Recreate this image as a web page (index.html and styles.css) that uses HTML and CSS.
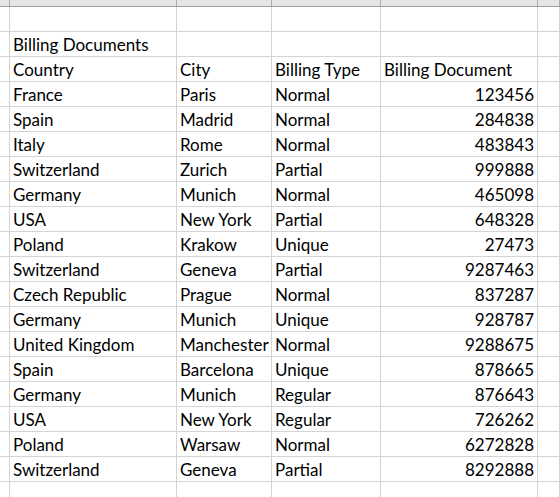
FILE: index.html
```html
<!DOCTYPE html>
<html>
<head>
<meta charset="utf-8">
<link rel="stylesheet" href="styles.css">
</head>
<body>
<div class="sheet">
  <div class="hd"></div><div class="hd"></div><div class="hd"></div><div class="hd"></div><div class="hd"></div><div class="hd"></div>

  <div class="c"></div><div class="c"></div><div class="c"></div><div class="c"></div><div class="c"></div><div class="c"></div>

  <div class="c"></div><div class="c ov">Billing Documents</div><div class="c"></div><div class="c"></div><div class="c"></div><div class="c"></div>

  <div class="c"></div><div class="c">Country</div><div class="c">City</div><div class="c">Billing Type</div><div class="c">Billing Document</div><div class="c"></div>

  <div class="c"></div><div class="c">France</div><div class="c">Paris</div><div class="c">Normal</div><div class="c n">123456</div><div class="c"></div>
  <div class="c"></div><div class="c">Spain</div><div class="c">Madrid</div><div class="c">Normal</div><div class="c n">284838</div><div class="c"></div>
  <div class="c"></div><div class="c">Italy</div><div class="c">Rome</div><div class="c">Normal</div><div class="c n">483843</div><div class="c"></div>
  <div class="c"></div><div class="c">Switzerland</div><div class="c">Zurich</div><div class="c">Partial</div><div class="c n">999888</div><div class="c"></div>
  <div class="c"></div><div class="c">Germany</div><div class="c">Munich</div><div class="c">Normal</div><div class="c n">465098</div><div class="c"></div>
  <div class="c"></div><div class="c">USA</div><div class="c">New York</div><div class="c">Partial</div><div class="c n">648328</div><div class="c"></div>
  <div class="c"></div><div class="c">Poland</div><div class="c">Krakow</div><div class="c">Unique</div><div class="c n">27473</div><div class="c"></div>
  <div class="c"></div><div class="c">Switzerland</div><div class="c">Geneva</div><div class="c">Partial</div><div class="c n">9287463</div><div class="c"></div>
  <div class="c"></div><div class="c">Czech Republic</div><div class="c">Prague</div><div class="c">Normal</div><div class="c n">837287</div><div class="c"></div>
  <div class="c"></div><div class="c">Germany</div><div class="c">Munich</div><div class="c">Unique</div><div class="c n">928787</div><div class="c"></div>
  <div class="c"></div><div class="c">United Kingdom</div><div class="c">Manchester</div><div class="c">Normal</div><div class="c n">9288675</div><div class="c"></div>
  <div class="c"></div><div class="c">Spain</div><div class="c">Barcelona</div><div class="c">Unique</div><div class="c n">878665</div><div class="c"></div>
  <div class="c"></div><div class="c">Germany</div><div class="c">Munich</div><div class="c">Regular</div><div class="c n">876643</div><div class="c"></div>
  <div class="c"></div><div class="c">USA</div><div class="c">New York</div><div class="c">Regular</div><div class="c n">726262</div><div class="c"></div>
  <div class="c"></div><div class="c">Poland</div><div class="c">Warsaw</div><div class="c">Normal</div><div class="c n">6272828</div><div class="c"></div>
  <div class="c"></div><div class="c">Switzerland</div><div class="c">Geneva</div><div class="c">Partial</div><div class="c n">8292888</div><div class="c"></div>

  <div class="c"></div><div class="c"></div><div class="c"></div><div class="c"></div><div class="c"></div><div class="c"></div>
</div>
</body>
</html>
```

FILE: styles.css
```css
html, body {
  margin: 0;
  padding: 0;
  background: #ffffff;
  overflow: hidden;
}

.sheet {
  display: grid;
  grid-template-columns: 10px 167px 95px 109px 157px 1fr;
  grid-template-rows: 7px;
  grid-auto-rows: 25px;
  width: 560px;
  height: 497px;
  overflow: hidden;
  font-family: "Lato", "Liberation Sans", sans-serif;
  font-size: 17px;
  color: #000000;
}

.hd {
  box-sizing: border-box;
  background: #e6e6e6;
  border-right: 1px solid #ababab;
  border-bottom: 1px solid #9f9f9f;
}

.c {
  box-sizing: border-box;
  border-right: 1px solid #d4d4d4;
  border-bottom: 1px solid #d4d4d4;
  line-height: 24px;
  padding: 1px 3px 0 3px;
  white-space: nowrap;
  overflow: hidden;
}

.c.ov {
  overflow: visible;
  position: relative;
  z-index: 1;
}

.c.n {
  text-align: right;
}
```
